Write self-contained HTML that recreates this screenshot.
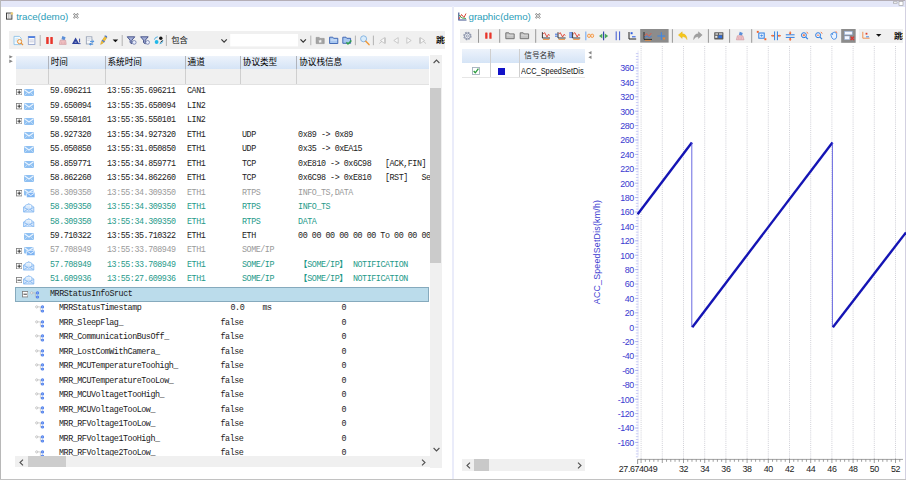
<!DOCTYPE html>
<html lang="zh">
<head>
<meta charset="utf-8">
<title>trace(demo) / graphic(demo)</title>
<style>
html,body{margin:0;padding:0;background:#fff;}
body{width:906px;height:480px;overflow:hidden;position:relative;font-family:"Liberation Sans","Noto Sans CJK SC",sans-serif;}
.abs{position:absolute;display:block;}
.m{font-family:"Liberation Mono","Noto Sans CJK SC",monospace;font-size:8.4px;letter-spacing:-0.455px;line-height:12px;white-space:nowrap;}
.h{font-family:"Liberation Sans","Noto Sans CJK SC",sans-serif;font-size:8.6px;line-height:12px;color:#000;white-space:nowrap;}
.tab{font-family:"Liberation Sans",sans-serif;font-size:9.8px;letter-spacing:-0.07px;line-height:14px;color:#2a9db8;white-space:nowrap;}
.ui{font-family:"Liberation Sans","Noto Sans CJK SC",sans-serif;font-size:8.4px;line-height:12px;color:#111;white-space:nowrap;}
.yl{font-family:"Liberation Sans",sans-serif;font-size:8.9px;letter-spacing:-0.5px;fill:#3a3ad0;}
.xl{font-family:"Liberation Sans",sans-serif;font-size:8.9px;letter-spacing:-0.4px;fill:#222;}
.yt{font-family:"Liberation Sans",sans-serif;font-size:8.8px;letter-spacing:0.22px;fill:#3a3ad0;}
.sg{font-family:"Liberation Sans",sans-serif;font-size:8.7px;line-height:12px;color:#111;white-space:nowrap;transform:scaleX(0.847);transform-origin:0 0;}
.fw{display:inline-block;width:9.17px;letter-spacing:0;font-weight:bold;overflow:visible;}
.fl{text-align:right;}
.fr{text-align:left;}
</style>
</head>
<body>
<!-- outer frame -->
<div class="abs" style="left:0;top:0;width:906px;height:6.7px;background:#e4e7f8"></div>
<div class="abs" style="left:0;top:0;width:906px;height:1px;background:#b4aeb6"></div>
<div class="abs" style="left:0;top:0;width:1px;height:480px;background:#b8b8b8"></div>
<div class="abs" style="left:452.1px;top:6px;width:2.1px;height:473px;background:#eaecfa"></div>
<div class="abs" style="left:904.7px;top:0px;width:1.3px;height:479px;background:#d3d1e1"></div>
<div class="abs" style="left:0;top:478.6px;width:906px;height:1.4px;background:#c2c2c2"></div>

<!-- ================= LEFT PANEL ================= -->
<!-- tab -->
<svg class="abs" style="left:6px;top:12.2px" width="7.6" height="8" viewBox="0 0 9 9"><rect x="0.6" y="1" width="6.4" height="7.2" fill="#f2f2f2" stroke="#3a3a3a" stroke-width="1.1"/><path d="M2.8 2V8M4.8 2V8" stroke="#9a9a9a" stroke-width="0.7"/><circle cx="7" cy="1.6" r="1.5" fill="#f1d27a"/></svg>
<span class="abs tab" style="left:16.2px;top:9.5px">trace(demo)</span>
<svg class="abs" style="left:73px;top:13.2px" width="5.8" height="5.8" viewBox="0 0 7 7"><path d="M0.8 0.8L6.2 6.2M6.2 0.8L0.8 6.2" stroke="#7a7a7a" stroke-width="2.2"/><path d="M0.8 0.8L6.2 6.2M6.2 0.8L0.8 6.2" stroke="#fff" stroke-width="0.9"/></svg>

<!-- toolbar -->
<div class="abs" style="left:9px;top:31px;width:436px;height:18.4px;background:#f0f0f0"></div>
<svg class="abs" style="left:0;top:0" width="906" height="480" viewBox="0 0 906 480">
<path d="M14 36.4H19.4L21.2 38.2V44.6H14Z" fill="#f4fafe" stroke="#8fc3e8" stroke-width="0.9"/>
<path d="M15.4 39H18.6M15.4 41H17.4" stroke="#a9d2ee" stroke-width="0.7"/>
<circle cx="19.6" cy="41.6" r="2.1" fill="#fdf3e4" stroke="#e8923a" stroke-width="1"/><path d="M21.2 43.2L23 45" stroke="#e8923a" stroke-width="1.2"/>
<rect x="28.3" y="36.4" width="6.6" height="8" fill="#fbfbfd" stroke="#8a9cc8" stroke-width="0.8"/><rect x="28.3" y="36.2" width="6.6" height="1.8" fill="#4f7fe0"/>
<path d="M29.4 40H33.8M29.4 41.8H33.8" stroke="#b9bdd0" stroke-width="0.7"/>
<path d="M40.2 35V46" stroke="#ababab" stroke-width="0.9"/>
<rect x="46.2" y="37" width="2.5" height="6.9" rx="0.5" fill="#e8352a"/><rect x="50.3" y="37" width="2.5" height="6.9" rx="0.5" fill="#e8352a"/>
<path d="M62.4 36L65.6 37.2L64.6 40.2L61.4 39.2Z" fill="#5b8fd8"/><path d="M60.2 40.2H65.6L66.2 44.4H59.4Z" fill="#f3c4c4" stroke="#c98f97" stroke-width="0.6"/><path d="M61.5 41.5V44M63 41.5V44M64.5 41.5V44" stroke="#d9a0a8" stroke-width="0.5"/>
<path d="M72 44L75.6 37.4L79.2 44Z" fill="#2b3f9a"/><path d="M74.6 42.2H76.6" stroke="#dfe4ff" stroke-width="0.7"/><path d="M79.6 38.6V42.4M78 43.6H80.6" stroke="#2b3f9a" stroke-width="0.9"/>
<rect x="86.3" y="36.8" width="5.6" height="7.2" fill="#f6f8fb" stroke="#8f9bb0" stroke-width="0.8"/><path d="M87.4 38.8H90.8M87.4 40.4H89.6" stroke="#b5bccb" stroke-width="0.6"/>
<path d="M90 41.4H93.8M92.4 40L93.8 41.4L92.4 42.8M93.2 44.2H89.6M91 43L89.6 44.2L91 45.2" stroke="#3f8ae0" stroke-width="0.9" fill="none"/>
<path d="M100.6 44.4L101.4 41.6L105.2 36L107 37.4L103.2 43Z" fill="#f2c233" stroke="#c9962a" stroke-width="0.5"/><path d="M104.2 35.8L106 35.4L107.2 36.6L106.6 38" fill="#4a78d0"/><path d="M102 40.2L104.6 42" stroke="#4a78d0" stroke-width="1.3"/>
<path d="M112.6 39.4H118.2L115.4 42.2Z" fill="#111"/>
<path d="M122.2 35V46" stroke="#ababab" stroke-width="0.9"/>
<path d="M127.2 36.8H134.8L131.9 40.2V43.8L130.1 42.6V40.2Z" fill="#a3aed6" stroke="#3c4a82" stroke-width="0.9"/>
<circle cx="134.2" cy="42.4" r="1.9" fill="#e9eefc" stroke="#5a6aa0" stroke-width="0.7"/>
<path d="M140.6 36.8H148.2L145.29999999999998 40.2V43.8L143.5 42.6V40.2Z" fill="#a3aed6" stroke="#3c4a82" stroke-width="0.9"/>
<circle cx="147.6" cy="42.4" r="1.9" fill="#e9eefc" stroke="#5a6aa0" stroke-width="0.7"/>
<circle cx="156.6" cy="42" r="1.9" fill="#22b8e8"/><circle cx="160.8" cy="38.2" r="1.7" fill="#151515"/>
<path d="M154.4 39.6Q155 37 157.8 36.8M163 40.6Q162.6 43.4 159.6 43.8" stroke="#3aa8e0" stroke-width="0.9" fill="none"/><path d="M160.4 42.4L162.6 40.4" stroke="#151515" stroke-width="0.9"/>
<path d="M166.4 35V46" stroke="#ababab" stroke-width="0.9"/>
<path d="M221.4 39.4L224.1 42.2L226.8 39.4" stroke="#3a3a3a" stroke-width="1.2" fill="none"/>
<rect x="230.2" y="34" width="67.8" height="12.4" fill="#fff"/>
<path d="M300.5 39.4L303.2 42.2L305.9 39.4" stroke="#333" stroke-width="1.2" fill="none"/>
<path d="M310.8 35.6V45.2" stroke="#ababab" stroke-width="0.9"/>
<path d="M316.2 37.4H319.2L320 38.4H324.2V43.6H316.2Z" fill="#a3a3a3" stroke="#8a8a8a" stroke-width="0.6"/><path d="M320.2 39.4L320.8 40.6L322 40.8L321.1 41.7L321.3 42.9L320.2 42.3L319.1 42.9L319.3 41.7L318.4 40.8L319.6 40.6Z" fill="#f4f4f4"/>
<path d="M329.6 37.2H332.8L333.6 38.3H337.8V43.5H329.6Z" fill="#a9c8f0" stroke="#365fb0" stroke-width="0.9"/><path d="M330.6 40H337" stroke="#e3eefc" stroke-width="0.8"/>
<path d="M342.8 37.2H346L346.8 38.3H350.6V43.3H342.8Z" fill="#a9c8f0" stroke="#365fb0" stroke-width="0.9"/><path d="M346.4 42.2L348 44L351.4 40.6" stroke="#2fa04a" stroke-width="1.4" fill="none"/>
<path d="M355.4 35.6V45.2" stroke="#ababab" stroke-width="0.9"/>
<circle cx="363.6" cy="38.8" r="3" fill="#d9ecfb" stroke="#7fb0e0" stroke-width="0.9"/><path d="M365.8 41.2L369 44.6" stroke="#f09a3a" stroke-width="1.5" stroke-linecap="round"/>
<path d="M373.4 35.6V45.2" stroke="#ababab" stroke-width="0.9"/>
<path d="M384.6 37.6V43.4L380.4 40.5Z" fill="#f8f8f8" stroke="#b8b8b8" stroke-width="0.7"/><path d="M379.2 43.6L382 41.2M385.4 37.6V43.6" stroke="#b8b8b8" stroke-width="0.7"/>
<path d="M398.2 37.6V43.4L393.8 40.5Z" fill="#f8f8f8" stroke="#b8b8b8" stroke-width="0.7"/>
<path d="M406.8 37.6V43.4L411.2 40.5Z" fill="#f8f8f8" stroke="#b8b8b8" stroke-width="0.7"/>
<path d="M420.4 37.6V43.4L424.6 40.5Z" fill="#f8f8f8" stroke="#b8b8b8" stroke-width="0.7"/><path d="M426 43.6L423.2 41.2M419.6 37.6V43.6" stroke="#b8b8b8" stroke-width="0.7"/>
</svg>
<span class="abs ui" style="left:171.2px;top:34.2px">包含</span>
<span class="abs ui" style="left:436px;top:34px;width:9px;overflow:hidden;font-weight:bold">跳转</span>

<!-- header -->
<svg class="abs" style="left:9px;top:55.4px" width="5" height="9" viewBox="0 0 5 9" ><path d="M0.3 0.2L3.8 1.8L0.3 3.4ZM0.3 4.5L3.8 6.2L0.3 7.9Z" fill="#858585"/></svg>
<div class="abs" style="left:15.6px;top:55.6px;width:413.6px;height:13.8px;background:linear-gradient(#edf3fb,#e2ecf9 45%,#d5e4f6)"></div>
<div class="abs" style="left:15.6px;top:69.4px;width:413.6px;height:15px;background:#f0f0f0"></div>
<div class="abs" style="left:15.6px;top:84.2px;width:413.6px;height:0.8px;background:#e2e2e2"></div>
<div class="abs" style="left:48.1px;top:55.6px;width:0.8px;height:13.8px;background:#b0b4bc"></div><div class="abs" style="left:48.1px;top:69.4px;width:0.8px;height:15px;background:#cfcfcf"></div>
<div class="abs" style="left:105px;top:55.6px;width:0.8px;height:13.8px;background:#b0b4bc"></div><div class="abs" style="left:105px;top:69.4px;width:0.8px;height:15px;background:#cfcfcf"></div>
<div class="abs" style="left:184.8px;top:55.6px;width:0.8px;height:13.8px;background:#b0b4bc"></div><div class="abs" style="left:184.8px;top:69.4px;width:0.8px;height:15px;background:#cfcfcf"></div>
<div class="abs" style="left:240.2px;top:55.6px;width:0.8px;height:13.8px;background:#b0b4bc"></div><div class="abs" style="left:240.2px;top:69.4px;width:0.8px;height:15px;background:#cfcfcf"></div>
<div class="abs" style="left:296.3px;top:55.6px;width:0.8px;height:13.8px;background:#b0b4bc"></div><div class="abs" style="left:296.3px;top:69.4px;width:0.8px;height:15px;background:#cfcfcf"></div>
<span class="abs h" style="left:50.7px;top:56.4px">时间</span>
<span class="abs h" style="left:107.5px;top:56.4px">系统时间</span>
<span class="abs h" style="left:187.6px;top:56.4px">通道</span>
<span class="abs h" style="left:242.8px;top:56.4px">协议类型</span>
<span class="abs h" style="left:299.2px;top:56.4px">协议栈信息</span>

<!-- rows -->
<svg class="abs" style="left:15.5px;top:88.90px" width="6.4" height="6.4" viewBox="0 0 7 7"><rect x="0.5" y="0.5" width="6" height="6" fill="#fff" stroke="#7c7c7c" stroke-width="0.9"/><path d="M1.6 3.5H5.4" stroke="#2a2a2a" stroke-width="1"/><path d="M3.5 1.6V5.4" stroke="#2a2a2a" stroke-width="1"/></svg>
<svg class="abs" style="left:24px;top:88.60px" width="10" height="7" viewBox="0 0 10 7"><rect x="0" y="0" width="10" height="7" rx="1" fill="#8fc0f2"/><path d="M0.5 0.8L5 4L9.5 0.8" stroke="#eaf4ff" stroke-width="1.1" fill="none"/><path d="M0.5 6.4L3.6 3.4M9.5 6.4L6.4 3.4" stroke="#d4e8fb" stroke-width="0.7" fill="none"/></svg>
<span class="abs m" style="left:50px;top:85.30px;color:#222222">59.696211</span>
<span class="abs m" style="left:107px;top:85.30px;color:#222222">13:55:35.696211</span>
<span class="abs m" style="left:187px;top:85.30px;color:#222222">CAN1</span>
<svg class="abs" style="left:15.5px;top:103.37px" width="6.4" height="6.4" viewBox="0 0 7 7"><rect x="0.5" y="0.5" width="6" height="6" fill="#fff" stroke="#7c7c7c" stroke-width="0.9"/><path d="M1.6 3.5H5.4" stroke="#2a2a2a" stroke-width="1"/><path d="M3.5 1.6V5.4" stroke="#2a2a2a" stroke-width="1"/></svg>
<svg class="abs" style="left:24px;top:103.07px" width="10" height="7" viewBox="0 0 10 7"><rect x="0" y="0" width="10" height="7" rx="1" fill="#8fc0f2"/><path d="M0.5 0.8L5 4L9.5 0.8" stroke="#eaf4ff" stroke-width="1.1" fill="none"/><path d="M0.5 6.4L3.6 3.4M9.5 6.4L6.4 3.4" stroke="#d4e8fb" stroke-width="0.7" fill="none"/></svg>
<span class="abs m" style="left:50px;top:99.77px;color:#222222">59.650094</span>
<span class="abs m" style="left:107px;top:99.77px;color:#222222">13:55:35.650094</span>
<span class="abs m" style="left:187px;top:99.77px;color:#222222">LIN2</span>
<svg class="abs" style="left:15.5px;top:117.84px" width="6.4" height="6.4" viewBox="0 0 7 7"><rect x="0.5" y="0.5" width="6" height="6" fill="#fff" stroke="#7c7c7c" stroke-width="0.9"/><path d="M1.6 3.5H5.4" stroke="#2a2a2a" stroke-width="1"/><path d="M3.5 1.6V5.4" stroke="#2a2a2a" stroke-width="1"/></svg>
<svg class="abs" style="left:24px;top:117.54px" width="10" height="7" viewBox="0 0 10 7"><rect x="0" y="0" width="10" height="7" rx="1" fill="#8fc0f2"/><path d="M0.5 0.8L5 4L9.5 0.8" stroke="#eaf4ff" stroke-width="1.1" fill="none"/><path d="M0.5 6.4L3.6 3.4M9.5 6.4L6.4 3.4" stroke="#d4e8fb" stroke-width="0.7" fill="none"/></svg>
<span class="abs m" style="left:50px;top:114.24px;color:#222222">59.550101</span>
<span class="abs m" style="left:107px;top:114.24px;color:#222222">13:55:35.550101</span>
<span class="abs m" style="left:187px;top:114.24px;color:#222222">LIN2</span>
<svg class="abs" style="left:24px;top:132.01px" width="10" height="7" viewBox="0 0 10 7"><rect x="0" y="0" width="10" height="7" rx="1" fill="#8fc0f2"/><path d="M0.5 0.8L5 4L9.5 0.8" stroke="#eaf4ff" stroke-width="1.1" fill="none"/><path d="M0.5 6.4L3.6 3.4M9.5 6.4L6.4 3.4" stroke="#d4e8fb" stroke-width="0.7" fill="none"/></svg>
<span class="abs m" style="left:50px;top:128.71px;color:#222222">58.927320</span>
<span class="abs m" style="left:107px;top:128.71px;color:#222222">13:55:34.927320</span>
<span class="abs m" style="left:187px;top:128.71px;color:#222222">ETH1</span>
<span class="abs m" style="left:242px;top:128.71px;color:#222222">UDP</span>
<span class="abs m" style="left:298.1px;top:128.71px;color:#222222">0x89&nbsp;->&nbsp;0x89</span>
<svg class="abs" style="left:24px;top:146.48px" width="10" height="7" viewBox="0 0 10 7"><rect x="0" y="0" width="10" height="7" rx="1" fill="#8fc0f2"/><path d="M0.5 0.8L5 4L9.5 0.8" stroke="#eaf4ff" stroke-width="1.1" fill="none"/><path d="M0.5 6.4L3.6 3.4M9.5 6.4L6.4 3.4" stroke="#d4e8fb" stroke-width="0.7" fill="none"/></svg>
<span class="abs m" style="left:50px;top:143.18px;color:#222222">55.050850</span>
<span class="abs m" style="left:107px;top:143.18px;color:#222222">13:55:31.050850</span>
<span class="abs m" style="left:187px;top:143.18px;color:#222222">ETH1</span>
<span class="abs m" style="left:242px;top:143.18px;color:#222222">UDP</span>
<span class="abs m" style="left:298.1px;top:143.18px;color:#222222">0x35&nbsp;->&nbsp;0xEA15</span>
<svg class="abs" style="left:24px;top:160.95px" width="10" height="7" viewBox="0 0 10 7"><rect x="0" y="0" width="10" height="7" rx="1" fill="#8fc0f2"/><path d="M0.5 0.8L5 4L9.5 0.8" stroke="#eaf4ff" stroke-width="1.1" fill="none"/><path d="M0.5 6.4L3.6 3.4M9.5 6.4L6.4 3.4" stroke="#d4e8fb" stroke-width="0.7" fill="none"/></svg>
<span class="abs m" style="left:50px;top:157.65px;color:#222222">58.859771</span>
<span class="abs m" style="left:107px;top:157.65px;color:#222222">13:55:34.859771</span>
<span class="abs m" style="left:187px;top:157.65px;color:#222222">ETH1</span>
<span class="abs m" style="left:242px;top:157.65px;color:#222222">TCP</span>
<span class="abs m" style="left:298.1px;top:157.65px;color:#222222">0xE810&nbsp;->&nbsp;0x6C98&nbsp;&nbsp;&nbsp;[ACK,FIN]</span>
<svg class="abs" style="left:24px;top:175.42px" width="10" height="7" viewBox="0 0 10 7"><rect x="0" y="0" width="10" height="7" rx="1" fill="#8fc0f2"/><path d="M0.5 0.8L5 4L9.5 0.8" stroke="#eaf4ff" stroke-width="1.1" fill="none"/><path d="M0.5 6.4L3.6 3.4M9.5 6.4L6.4 3.4" stroke="#d4e8fb" stroke-width="0.7" fill="none"/></svg>
<span class="abs m" style="left:50px;top:172.12px;color:#222222">58.862260</span>
<span class="abs m" style="left:107px;top:172.12px;color:#222222">13:55:34.862260</span>
<span class="abs m" style="left:187px;top:172.12px;color:#222222">ETH1</span>
<span class="abs m" style="left:242px;top:172.12px;color:#222222">TCP</span>
<span class="abs m" style="left:298.1px;top:172.12px;color:#222222">0x6C98&nbsp;->&nbsp;0xE810&nbsp;&nbsp;&nbsp;[RST]&nbsp;&nbsp;&nbsp;Se</span>
<svg class="abs" style="left:15.5px;top:190.19px" width="6.4" height="6.4" viewBox="0 0 7 7"><rect x="0.5" y="0.5" width="6" height="6" fill="#fff" stroke="#7c7c7c" stroke-width="0.9"/><path d="M1.6 3.5H5.4" stroke="#2a2a2a" stroke-width="1"/><path d="M3.5 1.6V5.4" stroke="#2a2a2a" stroke-width="1"/></svg>
<svg class="abs" style="left:24px;top:189.49px" width="11" height="8.5" viewBox="0 0 11 8.5"><rect x="0" y="0" width="9.5" height="6.5" rx="1" fill="#8fc0f2"/><path d="M0.5 0.8L4.7 3.8L9 0.8" stroke="#eaf4ff" stroke-width="1.1" fill="none"/><rect x="2.6" y="3.4" width="8.4" height="5.1" rx="0.9" fill="#7fb4f2" stroke="#eef6ff" stroke-width="0.7"/><path d="M3.2 4.2L6.8 6.6L10.4 4.2" stroke="#eef6ff" stroke-width="0.9" fill="none"/></svg>
<span class="abs m" style="left:50px;top:186.59px;color:#9a9a9a">58.309350</span>
<span class="abs m" style="left:107px;top:186.59px;color:#9a9a9a">13:55:34.309350</span>
<span class="abs m" style="left:187px;top:186.59px;color:#9a9a9a">ETH1</span>
<span class="abs m" style="left:242px;top:186.59px;color:#9a9a9a">RTPS</span>
<span class="abs m" style="left:298.1px;top:186.59px;color:#9a9a9a">INFO_TS,DATA</span>
<svg class="abs" style="left:23.4px;top:203.06px" width="11.4" height="9.6" viewBox="0 0 11.4 9.6"><path d="M0.6 4L5.7 0.7L10.8 4V9H0.6Z" fill="#dbeafc" stroke="#86b8f0" stroke-width="0.9"/><rect x="3" y="1.8" width="5.4" height="4" fill="#fbfdff" stroke="#9cc6f4" stroke-width="0.6"/><path d="M4 3.2H7.4M4 4.4H7.4" stroke="#a9cdf5" stroke-width="0.5"/><path d="M0.8 4.4L5.7 7.2L10.6 4.4M0.8 8.8L4.4 6.4M10.6 8.8L7 6.4" stroke="#86b8f0" stroke-width="0.9" fill="none"/></svg>
<span class="abs m" style="left:50px;top:201.06px;color:#1f9a8a">58.309350</span>
<span class="abs m" style="left:107px;top:201.06px;color:#1f9a8a">13:55:34.309350</span>
<span class="abs m" style="left:187px;top:201.06px;color:#1f9a8a">ETH1</span>
<span class="abs m" style="left:242px;top:201.06px;color:#1f9a8a">RTPS</span>
<span class="abs m" style="left:298.1px;top:201.06px;color:#1f9a8a">INFO_TS</span>
<svg class="abs" style="left:23.4px;top:217.53px" width="11.4" height="9.6" viewBox="0 0 11.4 9.6"><path d="M0.6 4L5.7 0.7L10.8 4V9H0.6Z" fill="#dbeafc" stroke="#86b8f0" stroke-width="0.9"/><rect x="3" y="1.8" width="5.4" height="4" fill="#fbfdff" stroke="#9cc6f4" stroke-width="0.6"/><path d="M4 3.2H7.4M4 4.4H7.4" stroke="#a9cdf5" stroke-width="0.5"/><path d="M0.8 4.4L5.7 7.2L10.6 4.4M0.8 8.8L4.4 6.4M10.6 8.8L7 6.4" stroke="#86b8f0" stroke-width="0.9" fill="none"/></svg>
<span class="abs m" style="left:50px;top:215.53px;color:#1f9a8a">58.309350</span>
<span class="abs m" style="left:107px;top:215.53px;color:#1f9a8a">13:55:34.309350</span>
<span class="abs m" style="left:187px;top:215.53px;color:#1f9a8a">ETH1</span>
<span class="abs m" style="left:242px;top:215.53px;color:#1f9a8a">RTPS</span>
<span class="abs m" style="left:298.1px;top:215.53px;color:#1f9a8a">DATA</span>
<svg class="abs" style="left:24px;top:233.30px" width="10" height="7" viewBox="0 0 10 7"><rect x="0" y="0" width="10" height="7" rx="1" fill="#8fc0f2"/><path d="M0.5 0.8L5 4L9.5 0.8" stroke="#eaf4ff" stroke-width="1.1" fill="none"/><path d="M0.5 6.4L3.6 3.4M9.5 6.4L6.4 3.4" stroke="#d4e8fb" stroke-width="0.7" fill="none"/></svg>
<span class="abs m" style="left:50px;top:230.00px;color:#222222">59.710322</span>
<span class="abs m" style="left:107px;top:230.00px;color:#222222">13:55:35.710322</span>
<span class="abs m" style="left:187px;top:230.00px;color:#222222">ETH1</span>
<span class="abs m" style="left:242px;top:230.00px;color:#222222">ETH</span>
<span class="abs m" style="left:298.1px;top:230.00px;color:#222222">00&nbsp;00&nbsp;00&nbsp;00&nbsp;00&nbsp;00&nbsp;To&nbsp;00&nbsp;00&nbsp;00</span>
<svg class="abs" style="left:15.5px;top:248.07px" width="6.4" height="6.4" viewBox="0 0 7 7"><rect x="0.5" y="0.5" width="6" height="6" fill="#fff" stroke="#7c7c7c" stroke-width="0.9"/><path d="M1.6 3.5H5.4" stroke="#2a2a2a" stroke-width="1"/><path d="M3.5 1.6V5.4" stroke="#2a2a2a" stroke-width="1"/></svg>
<svg class="abs" style="left:24px;top:247.37px" width="11" height="8.5" viewBox="0 0 11 8.5"><rect x="0" y="0" width="9.5" height="6.5" rx="1" fill="#8fc0f2"/><path d="M0.5 0.8L4.7 3.8L9 0.8" stroke="#eaf4ff" stroke-width="1.1" fill="none"/><rect x="2.6" y="3.4" width="8.4" height="5.1" rx="0.9" fill="#7fb4f2" stroke="#eef6ff" stroke-width="0.7"/><path d="M3.2 4.2L6.8 6.6L10.4 4.2" stroke="#eef6ff" stroke-width="0.9" fill="none"/></svg>
<span class="abs m" style="left:50px;top:244.47px;color:#9a9a9a">57.708949</span>
<span class="abs m" style="left:107px;top:244.47px;color:#9a9a9a">13:55:33.708949</span>
<span class="abs m" style="left:187px;top:244.47px;color:#9a9a9a">ETH1</span>
<span class="abs m" style="left:242px;top:244.47px;color:#9a9a9a">SOME/IP</span>
<svg class="abs" style="left:15.5px;top:262.54px" width="6.4" height="6.4" viewBox="0 0 7 7"><rect x="0.5" y="0.5" width="6" height="6" fill="#fff" stroke="#7c7c7c" stroke-width="0.9"/><path d="M1.6 3.5H5.4" stroke="#2a2a2a" stroke-width="1"/><path d="M3.5 1.6V5.4" stroke="#2a2a2a" stroke-width="1"/></svg>
<svg class="abs" style="left:23.4px;top:260.94px" width="11.4" height="9.6" viewBox="0 0 11.4 9.6"><path d="M0.6 4L5.7 0.7L10.8 4V9H0.6Z" fill="#dbeafc" stroke="#86b8f0" stroke-width="0.9"/><rect x="3" y="1.8" width="5.4" height="4" fill="#fbfdff" stroke="#9cc6f4" stroke-width="0.6"/><path d="M4 3.2H7.4M4 4.4H7.4" stroke="#a9cdf5" stroke-width="0.5"/><path d="M0.8 4.4L5.7 7.2L10.6 4.4M0.8 8.8L4.4 6.4M10.6 8.8L7 6.4" stroke="#86b8f0" stroke-width="0.9" fill="none"/></svg>
<span class="abs m" style="left:50px;top:258.94px;color:#1f9a8a">57.708949</span>
<span class="abs m" style="left:107px;top:258.94px;color:#1f9a8a">13:55:33.708949</span>
<span class="abs m" style="left:187px;top:258.94px;color:#1f9a8a">ETH1</span>
<span class="abs m" style="left:242px;top:258.94px;color:#1f9a8a">SOME/IP</span>
<span class="abs m" style="left:298.1px;top:258.94px;color:#1f9a8a"><span class="fw fl">【</span>SOME/IP<span class="fw fr">】</span>&nbsp;NOTIFICATION</span>
<svg class="abs" style="left:15.5px;top:277.01px" width="6.4" height="6.4" viewBox="0 0 7 7"><rect x="0.5" y="0.5" width="6" height="6" fill="#fff" stroke="#7c7c7c" stroke-width="0.9"/><path d="M1.6 3.5H5.4" stroke="#2a2a2a" stroke-width="1"/></svg>
<svg class="abs" style="left:23.4px;top:275.41px" width="11.4" height="9.6" viewBox="0 0 11.4 9.6"><path d="M0.6 4L5.7 0.7L10.8 4V9H0.6Z" fill="#dbeafc" stroke="#86b8f0" stroke-width="0.9"/><rect x="3" y="1.8" width="5.4" height="4" fill="#fbfdff" stroke="#9cc6f4" stroke-width="0.6"/><path d="M4 3.2H7.4M4 4.4H7.4" stroke="#a9cdf5" stroke-width="0.5"/><path d="M0.8 4.4L5.7 7.2L10.6 4.4M0.8 8.8L4.4 6.4M10.6 8.8L7 6.4" stroke="#86b8f0" stroke-width="0.9" fill="none"/></svg>
<span class="abs m" style="left:50px;top:273.41px;color:#1f9a8a">51.609936</span>
<span class="abs m" style="left:107px;top:273.41px;color:#1f9a8a">13:55:27.609936</span>
<span class="abs m" style="left:187px;top:273.41px;color:#1f9a8a">ETH1</span>
<span class="abs m" style="left:242px;top:273.41px;color:#1f9a8a">SOME/IP</span>
<span class="abs m" style="left:298.1px;top:273.41px;color:#1f9a8a"><span class="fw fl">【</span>SOME/IP<span class="fw fr">】</span>&nbsp;NOTIFICATION</span>
<div class="abs" style="left:15.2px;top:287.18px;width:414.2px;height:14.6px;background:#bbdceb;border:0.8px solid #86aabd;box-sizing:border-box"></div>
<svg class="abs" style="left:22px;top:291.28px" width="6.4" height="6.4" viewBox="0 0 7 7"><rect x="0.5" y="0.5" width="6" height="6" fill="#fff" stroke="#7c7c7c" stroke-width="0.9"/><path d="M1.6 3.5H5.4" stroke="#2a2a2a" stroke-width="1"/></svg>
<svg class="abs" style="left:30px;top:290.68px" width="10" height="8" viewBox="0 0 10 8"><circle cx="1.7" cy="1.9" r="1.1" fill="#fff" stroke="#a4a4a4" stroke-width="0.6"/><path d="M2.8 1.9H5.4V6.2H6.2M5.4 1.9H6.2" stroke="#b4b4b4" stroke-width="0.6" fill="none"/><circle cx="7.5" cy="1.9" r="1.55" fill="#4a7cec"/><circle cx="7.5" cy="1.9" r="0.6" fill="#9dbcf8"/><circle cx="7.5" cy="6" r="1.55" fill="#4a7cec"/><circle cx="7.5" cy="6" r="0.6" fill="#9dbcf8"/></svg>
<span class="abs m" style="left:50px;top:287.88px;color:#1a1a1a">MRRStatusInfoSruct</span>
<svg class="abs" style="left:35px;top:305.15px" width="10" height="8" viewBox="0 0 10 8"><circle cx="1.7" cy="1.9" r="1.1" fill="#fff" stroke="#a4a4a4" stroke-width="0.6"/><path d="M2.8 1.9H5.4V6.2H6.2M5.4 1.9H6.2" stroke="#b4b4b4" stroke-width="0.6" fill="none"/><circle cx="7.5" cy="1.9" r="1.55" fill="#4a7cec"/><circle cx="7.5" cy="1.9" r="0.6" fill="#9dbcf8"/><circle cx="7.5" cy="6" r="1.55" fill="#4a7cec"/><circle cx="7.5" cy="6" r="0.6" fill="#9dbcf8"/></svg>
<span class="abs m" style="left:59px;top:302.35px;color:#1a1a1a">MRRStatusTimestamp</span>
<span class="abs m" style="left:230.5px;top:302.35px;color:#1a1a1a">0.0</span>
<span class="abs m" style="left:262.5px;top:302.35px;color:#1a1a1a">ms</span>
<span class="abs m" style="left:341.5px;top:302.35px;color:#1a1a1a">0</span>
<svg class="abs" style="left:35px;top:319.62px" width="10" height="8" viewBox="0 0 10 8"><circle cx="1.7" cy="1.9" r="1.1" fill="#fff" stroke="#a4a4a4" stroke-width="0.6"/><path d="M2.8 1.9H5.4V6.2H6.2M5.4 1.9H6.2" stroke="#b4b4b4" stroke-width="0.6" fill="none"/><circle cx="7.5" cy="1.9" r="1.55" fill="#4a7cec"/><circle cx="7.5" cy="1.9" r="0.6" fill="#9dbcf8"/><circle cx="7.5" cy="6" r="1.55" fill="#4a7cec"/><circle cx="7.5" cy="6" r="0.6" fill="#9dbcf8"/></svg>
<span class="abs m" style="left:59px;top:316.82px;color:#1a1a1a">MRR_SleepFlag_</span>
<span class="abs m" style="left:220.5px;top:316.82px;color:#1a1a1a">false</span>
<span class="abs m" style="left:341.5px;top:316.82px;color:#1a1a1a">0</span>
<svg class="abs" style="left:35px;top:334.09px" width="10" height="8" viewBox="0 0 10 8"><circle cx="1.7" cy="1.9" r="1.1" fill="#fff" stroke="#a4a4a4" stroke-width="0.6"/><path d="M2.8 1.9H5.4V6.2H6.2M5.4 1.9H6.2" stroke="#b4b4b4" stroke-width="0.6" fill="none"/><circle cx="7.5" cy="1.9" r="1.55" fill="#4a7cec"/><circle cx="7.5" cy="1.9" r="0.6" fill="#9dbcf8"/><circle cx="7.5" cy="6" r="1.55" fill="#4a7cec"/><circle cx="7.5" cy="6" r="0.6" fill="#9dbcf8"/></svg>
<span class="abs m" style="left:59px;top:331.29px;color:#1a1a1a">MRR_CommunicationBusOff_</span>
<span class="abs m" style="left:220.5px;top:331.29px;color:#1a1a1a">false</span>
<span class="abs m" style="left:341.5px;top:331.29px;color:#1a1a1a">0</span>
<svg class="abs" style="left:35px;top:348.56px" width="10" height="8" viewBox="0 0 10 8"><circle cx="1.7" cy="1.9" r="1.1" fill="#fff" stroke="#a4a4a4" stroke-width="0.6"/><path d="M2.8 1.9H5.4V6.2H6.2M5.4 1.9H6.2" stroke="#b4b4b4" stroke-width="0.6" fill="none"/><circle cx="7.5" cy="1.9" r="1.55" fill="#4a7cec"/><circle cx="7.5" cy="1.9" r="0.6" fill="#9dbcf8"/><circle cx="7.5" cy="6" r="1.55" fill="#4a7cec"/><circle cx="7.5" cy="6" r="0.6" fill="#9dbcf8"/></svg>
<span class="abs m" style="left:59px;top:345.76px;color:#1a1a1a">MRR_LostComWithCamera_</span>
<span class="abs m" style="left:220.5px;top:345.76px;color:#1a1a1a">false</span>
<span class="abs m" style="left:341.5px;top:345.76px;color:#1a1a1a">0</span>
<svg class="abs" style="left:35px;top:363.03px" width="10" height="8" viewBox="0 0 10 8"><circle cx="1.7" cy="1.9" r="1.1" fill="#fff" stroke="#a4a4a4" stroke-width="0.6"/><path d="M2.8 1.9H5.4V6.2H6.2M5.4 1.9H6.2" stroke="#b4b4b4" stroke-width="0.6" fill="none"/><circle cx="7.5" cy="1.9" r="1.55" fill="#4a7cec"/><circle cx="7.5" cy="1.9" r="0.6" fill="#9dbcf8"/><circle cx="7.5" cy="6" r="1.55" fill="#4a7cec"/><circle cx="7.5" cy="6" r="0.6" fill="#9dbcf8"/></svg>
<span class="abs m" style="left:59px;top:360.23px;color:#1a1a1a">MRR_MCUTemperatureToohigh_</span>
<span class="abs m" style="left:220.5px;top:360.23px;color:#1a1a1a">false</span>
<span class="abs m" style="left:341.5px;top:360.23px;color:#1a1a1a">0</span>
<svg class="abs" style="left:35px;top:377.50px" width="10" height="8" viewBox="0 0 10 8"><circle cx="1.7" cy="1.9" r="1.1" fill="#fff" stroke="#a4a4a4" stroke-width="0.6"/><path d="M2.8 1.9H5.4V6.2H6.2M5.4 1.9H6.2" stroke="#b4b4b4" stroke-width="0.6" fill="none"/><circle cx="7.5" cy="1.9" r="1.55" fill="#4a7cec"/><circle cx="7.5" cy="1.9" r="0.6" fill="#9dbcf8"/><circle cx="7.5" cy="6" r="1.55" fill="#4a7cec"/><circle cx="7.5" cy="6" r="0.6" fill="#9dbcf8"/></svg>
<span class="abs m" style="left:59px;top:374.70px;color:#1a1a1a">MRR_MCUTemperatureTooLow_</span>
<span class="abs m" style="left:220.5px;top:374.70px;color:#1a1a1a">false</span>
<span class="abs m" style="left:341.5px;top:374.70px;color:#1a1a1a">0</span>
<svg class="abs" style="left:35px;top:391.97px" width="10" height="8" viewBox="0 0 10 8"><circle cx="1.7" cy="1.9" r="1.1" fill="#fff" stroke="#a4a4a4" stroke-width="0.6"/><path d="M2.8 1.9H5.4V6.2H6.2M5.4 1.9H6.2" stroke="#b4b4b4" stroke-width="0.6" fill="none"/><circle cx="7.5" cy="1.9" r="1.55" fill="#4a7cec"/><circle cx="7.5" cy="1.9" r="0.6" fill="#9dbcf8"/><circle cx="7.5" cy="6" r="1.55" fill="#4a7cec"/><circle cx="7.5" cy="6" r="0.6" fill="#9dbcf8"/></svg>
<span class="abs m" style="left:59px;top:389.17px;color:#1a1a1a">MRR_MCUVoltagetTooHigh_</span>
<span class="abs m" style="left:220.5px;top:389.17px;color:#1a1a1a">false</span>
<span class="abs m" style="left:341.5px;top:389.17px;color:#1a1a1a">0</span>
<svg class="abs" style="left:35px;top:406.44px" width="10" height="8" viewBox="0 0 10 8"><circle cx="1.7" cy="1.9" r="1.1" fill="#fff" stroke="#a4a4a4" stroke-width="0.6"/><path d="M2.8 1.9H5.4V6.2H6.2M5.4 1.9H6.2" stroke="#b4b4b4" stroke-width="0.6" fill="none"/><circle cx="7.5" cy="1.9" r="1.55" fill="#4a7cec"/><circle cx="7.5" cy="1.9" r="0.6" fill="#9dbcf8"/><circle cx="7.5" cy="6" r="1.55" fill="#4a7cec"/><circle cx="7.5" cy="6" r="0.6" fill="#9dbcf8"/></svg>
<span class="abs m" style="left:59px;top:403.64px;color:#1a1a1a">MRR_MCUVoltageTooLow_</span>
<span class="abs m" style="left:220.5px;top:403.64px;color:#1a1a1a">false</span>
<span class="abs m" style="left:341.5px;top:403.64px;color:#1a1a1a">0</span>
<svg class="abs" style="left:35px;top:420.91px" width="10" height="8" viewBox="0 0 10 8"><circle cx="1.7" cy="1.9" r="1.1" fill="#fff" stroke="#a4a4a4" stroke-width="0.6"/><path d="M2.8 1.9H5.4V6.2H6.2M5.4 1.9H6.2" stroke="#b4b4b4" stroke-width="0.6" fill="none"/><circle cx="7.5" cy="1.9" r="1.55" fill="#4a7cec"/><circle cx="7.5" cy="1.9" r="0.6" fill="#9dbcf8"/><circle cx="7.5" cy="6" r="1.55" fill="#4a7cec"/><circle cx="7.5" cy="6" r="0.6" fill="#9dbcf8"/></svg>
<span class="abs m" style="left:59px;top:418.11px;color:#1a1a1a">MRR_RFVoltage1TooLow_</span>
<span class="abs m" style="left:220.5px;top:418.11px;color:#1a1a1a">false</span>
<span class="abs m" style="left:341.5px;top:418.11px;color:#1a1a1a">0</span>
<svg class="abs" style="left:35px;top:435.38px" width="10" height="8" viewBox="0 0 10 8"><circle cx="1.7" cy="1.9" r="1.1" fill="#fff" stroke="#a4a4a4" stroke-width="0.6"/><path d="M2.8 1.9H5.4V6.2H6.2M5.4 1.9H6.2" stroke="#b4b4b4" stroke-width="0.6" fill="none"/><circle cx="7.5" cy="1.9" r="1.55" fill="#4a7cec"/><circle cx="7.5" cy="1.9" r="0.6" fill="#9dbcf8"/><circle cx="7.5" cy="6" r="1.55" fill="#4a7cec"/><circle cx="7.5" cy="6" r="0.6" fill="#9dbcf8"/></svg>
<span class="abs m" style="left:59px;top:432.58px;color:#1a1a1a">MRR_RFVoltage1TooHigh_</span>
<span class="abs m" style="left:220.5px;top:432.58px;color:#1a1a1a">false</span>
<span class="abs m" style="left:341.5px;top:432.58px;color:#1a1a1a">0</span>
<svg class="abs" style="left:35px;top:449.85px" width="10" height="8" viewBox="0 0 10 8"><circle cx="1.7" cy="1.9" r="1.1" fill="#fff" stroke="#a4a4a4" stroke-width="0.6"/><path d="M2.8 1.9H5.4V6.2H6.2M5.4 1.9H6.2" stroke="#b4b4b4" stroke-width="0.6" fill="none"/><circle cx="7.5" cy="1.9" r="1.55" fill="#4a7cec"/><circle cx="7.5" cy="1.9" r="0.6" fill="#9dbcf8"/><circle cx="7.5" cy="6" r="1.55" fill="#4a7cec"/><circle cx="7.5" cy="6" r="0.6" fill="#9dbcf8"/></svg>
<span class="abs m" style="left:59px;top:447.05px;color:#1a1a1a">MRR_RFVoltage2TooLow_</span>
<span class="abs m" style="left:220.5px;top:447.05px;color:#1a1a1a">false</span>
<span class="abs m" style="left:341.5px;top:447.05px;color:#1a1a1a">0</span>

<!-- scrollbars -->
<div class="abs" style="left:430px;top:54.8px;width:12px;height:412.8px;background:#f0f0f0"></div>
<div class="abs" style="left:430.4px;top:88px;width:11px;height:175.2px;background:#cbcbcb"></div>
<svg class="abs" style="left:432.5px;top:58.5px" width="7" height="5" viewBox="0 0 7 5"><path d="M0.6 4L3.5 1L6.4 4" stroke="#505050" stroke-width="1.1" fill="none"/></svg>
<svg class="abs" style="left:432.5px;top:447px" width="7" height="5" viewBox="0 0 7 5"><path d="M0.6 1L3.5 4L6.4 1" stroke="#505050" stroke-width="1.1" fill="none"/></svg>
<div class="abs" style="left:15.1px;top:456.3px;width:426.9px;height:11.2px;background:#f0f0f0"></div>
<div class="abs" style="left:28px;top:456.3px;width:37.8px;height:11.2px;background:#cdcdcd"></div>
<svg class="abs" style="left:19px;top:458.5px" width="5" height="7" viewBox="0 0 5 7"><path d="M4 0.6L1 3.5L4 6.4" stroke="#505050" stroke-width="1.1" fill="none"/></svg>
<svg class="abs" style="left:421px;top:458.5px" width="5" height="7" viewBox="0 0 5 7"><path d="M1 0.6L4 3.5L1 6.4" stroke="#505050" stroke-width="1.1" fill="none"/></svg>

<!-- ================= RIGHT PANEL ================= -->
<svg class="abs" style="left:458px;top:12px" width="9" height="9" viewBox="0 0 9 9"><path d="M0.8 0.5V8H8.5" stroke="#3b4f8c" stroke-width="1.1" fill="none"/><path d="M1 7L3.5 2.5L6 5.5L8 1.5" stroke="#d94a3a" stroke-width="1" fill="none"/><path d="M1 3L4 6L8 6.5" stroke="#3aa04a" stroke-width="0.9" fill="none"/></svg>
<span class="abs tab" style="left:468.5px;top:9.5px">graphic(demo)</span>
<svg class="abs" style="left:535px;top:13.2px" width="5.8" height="5.8" viewBox="0 0 7 7"><path d="M0.8 0.8L6.2 6.2M6.2 0.8L0.8 6.2" stroke="#7a7a7a" stroke-width="2.2"/><path d="M0.8 0.8L6.2 6.2M6.2 0.8L0.8 6.2" stroke="#fff" stroke-width="0.9"/></svg>
<!-- min/max -->
<svg class="abs" style="left:893px;top:1px" width="11" height="5" viewBox="0 0 11 5"><rect x="0.5" y="0.8" width="3.6" height="1.4" fill="#fff" stroke="#9a9a9a" stroke-width="0.6"/><rect x="6" y="0.5" width="4" height="3.8" fill="#fff" stroke="#9a9a9a" stroke-width="0.6"/></svg>

<div class="abs" style="left:460px;top:29px;width:443px;height:14px;background:#f0f0f0"></div>
<svg class="abs" style="left:0;top:0" width="906" height="480" viewBox="0 0 906 480">
<circle cx="467.4" cy="36" r="3.4" fill="none" stroke="#959cb0" stroke-width="1.6" stroke-dasharray="1.6 1.07"/><circle cx="467.4" cy="36" r="2.9" fill="#eceef4" stroke="#8c94aa" stroke-width="1"/><circle cx="467.4" cy="36" r="1.1" fill="#f8f8fb" stroke="#7d86a0" stroke-width="0.7"/>
<path d="M478.5 29.2V42.8" stroke="#8f8f8f" stroke-width="0.9"/>
<rect x="485.2" y="32.6" width="2.3" height="6.2" rx="0.5" fill="#e8352a"/><rect x="489.3" y="32.6" width="2.3" height="6.2" rx="0.5" fill="#e8352a"/>
<path d="M499.7 29.2V42.8" stroke="#8f8f8f" stroke-width="0.9"/>
<path d="M505.8 32.8H508.8L509.6 33.9H514.2V38.7H505.8Z" fill="#c4c4c4" stroke="#6c6c6c" stroke-width="0.9"/><path d="M506.8 35.2H513.4" stroke="#e4e4e4" stroke-width="0.7"/>
<path d="M520.2 32.8H523.2L524.0 33.9H528.6V38.7H520.2Z" fill="#c4c4c4" stroke="#6c6c6c" stroke-width="0.9"/><path d="M521.2 35.2H527.8000000000001" stroke="#e4e4e4" stroke-width="0.7"/>
<path d="M535.7 29.2V42.8" stroke="#8f8f8f" stroke-width="0.9"/>
<path d="M542.4 32.2V38H550" stroke="#222" stroke-width="0.9" fill="none"/><path d="M543 34.2L544.6 32.6L547 37L548.4 34.4L549.8 35.4" stroke="#e03a2a" stroke-width="0.9" fill="none"/><path d="M543 39.5H549.4" stroke="#f08a30" stroke-width="0.8"/>
<path d="M555.0 34.2H557.6M555.0 36.2H557.6" stroke="#3a6fe0" stroke-width="1"/><path d="M558.0 32.2V38H565.6" stroke="#222" stroke-width="0.9" fill="none"/><path d="M558.6 34.2L560.2 32.6L562.6 37L564.0 34.4L565.4 35.4" stroke="#e03a2a" stroke-width="0.9" fill="none"/><path d="M558.6 39.5H565.0" stroke="#f08a30" stroke-width="0.8"/>
<rect x="569.8000000000001" y="32.4" width="2" height="5.4" fill="#8fb4f0" stroke="#3a6fe0" stroke-width="0.5"/><path d="M572.6 32.2V38H580.2" stroke="#222" stroke-width="0.9" fill="none"/><path d="M573.2 34.2L574.8000000000001 32.6L577.2 37L578.6 34.4L580.0 35.4" stroke="#e03a2a" stroke-width="0.9" fill="none"/><path d="M573.2 39.5H579.6" stroke="#f08a30" stroke-width="0.8"/>
<path d="M585.8 31.4V40.2" stroke="#7fb0f0" stroke-width="1.2"/><ellipse cx="589" cy="35.8" rx="1.5" ry="1.7" fill="#fbe5d0" stroke="#f08a30" stroke-width="0.8"/><ellipse cx="592.2" cy="35.8" rx="1.5" ry="1.7" fill="#fbe5d0" stroke="#f08a30" stroke-width="0.8"/>
<path d="M603.6 31.6V40.2" stroke="#2b3fa8" stroke-width="1.1"/><path d="M602.4 33.4V38.6L599 36Z" fill="#4aa85a"/><path d="M604.8 33.4V38.6L608.2 36Z" fill="#4aa85a"/>
<path d="M616.2 31.4V40.2M619.6 31.4V40.2" stroke="#3a56d0" stroke-width="1"/>
<path d="M629 32V39H636.2" stroke="#222" stroke-width="1" fill="none"/><rect x="630.6" y="32.2" width="2" height="2" fill="#2f5fe0"/><path d="M632 36.8H635.6" stroke="#2f5fe0" stroke-width="1.1"/>
<rect x="640.2" y="29" width="28.4" height="13.6" fill="#8c8c8c"/>
<path d="M644 32V39.4H652" stroke="#222" stroke-width="0.9" fill="none"/><path d="M644.6 36L646.6 33.6L648.6 36.4L651.4 33" stroke="#e05a4a" stroke-width="0.9" fill="none"/><path d="M644.6 37.6L647 35.8L649.4 37.8L651.6 36.4" stroke="#3a7fe0" stroke-width="0.9" fill="none"/><path d="M645 40.4H651" stroke="#f08a30" stroke-width="0.7"/>
<path d="M657.4 36H665.2M661.3 32.2V39.8" stroke="#3a86e8" stroke-width="1"/><rect x="663.2" y="37.6" width="1.8" height="1.8" fill="#f08a30"/>
<path d="M672.4 29.2V42.8" stroke="#8f8f8f" stroke-width="0.9"/>
<path d="M678.4 35L682.2 31.8V33.8Q686.8 33.8 687 39.6Q685.6 36.4 682.2 36.4V38.4Z" fill="#f5c71a" stroke="#e0ac10" stroke-width="0.4"/>
<path d="M702.2 35L698.4 31.8V33.8Q693.8 33.8 693.6 39.6Q695 36.4 698.4 36.4V38.4Z" fill="#a0a0a0" stroke="#8a8a8a" stroke-width="0.4"/>
<path d="M708.4 29.2V42.8" stroke="#8f8f8f" stroke-width="0.9"/>
<rect x="714.2" y="32.2" width="9.2" height="7.2" rx="0.6" fill="#5c5c5c"/><rect x="715.4" y="33.2" width="2.6" height="1.6" fill="#c9c9c9"/><rect x="719" y="33.2" width="3.4" height="1.6" fill="#c9c9c9"/><rect x="718.4" y="35.4" width="3.6" height="2.8" fill="#2f6fe0"/><rect x="715.2" y="35.8" width="2.2" height="2" fill="#e8e8e8"/>
<path d="M729.6 29.2V42.8" stroke="#8f8f8f" stroke-width="0.9"/>
<path d="M739.8 31.8L742.8 33L741.8 35.8L738.8 34.8Z" fill="#5b8fd8"/><path d="M737.4 35.8H742.8L744 39.8H736.4Z" fill="#f1c3c8" stroke="#c98f97" stroke-width="0.6"/><path d="M738.5 37V39.4M740 37V39.4M741.5 37V39.4" stroke="#d9a0a8" stroke-width="0.5"/>
<path d="M751.7 29.2V42.8" stroke="#8f8f8f" stroke-width="0.9"/>
<rect x="758.8" y="33" width="5.4" height="5.2" fill="#eaf3ff" stroke="#2f7fe0" stroke-width="1"/><path d="M760.2 35.6H763M761.6 34.4V36.8" stroke="#2f7fe0" stroke-width="0.7"/><rect x="756.8" y="30.9" width="1.9" height="1.9" fill="#f0622a"/><rect x="764.4" y="38.3" width="1.9" height="1.9" fill="#f0622a"/>
<path d="M774.6 31.4V40.2M777.4 31.4V40.2" stroke="#2f7fe0" stroke-width="1"/><path d="M771 35.8H774M778 35.8H781" stroke="#f0622a" stroke-width="1.1"/><path d="M772.6 34.4L774.2 35.8L772.6 37.2ZM779.4 34.4L777.8 35.8L779.4 37.2Z" fill="#f0622a"/>
<path d="M785.8 34.8H794.6M785.8 37.4H794.6" stroke="#2f7fe0" stroke-width="1"/><path d="M790.2 31.4V34.2M790.2 38V40.8" stroke="#f0622a" stroke-width="1.1"/><path d="M788.8 32.8L790.2 34.4L791.6 32.8ZM788.8 39.4L790.2 37.8L791.6 39.4Z" fill="#f0622a"/>
<circle cx="803.9" cy="35.2" r="2.5" fill="#eaf3ff" stroke="#2f7fe0" stroke-width="1"/><path d="M805.8 37.2L807.8 39.2" stroke="#2f7fe0" stroke-width="1.2"/><path d="M802.6 35.2H805.2" stroke="#f0622a" stroke-width="0.8"/><path d="M806.6 32.2L808.2 33.4" stroke="#f0622a" stroke-width="0.9"/>
<circle cx="818.1" cy="35.2" r="2.5" fill="#eaf3ff" stroke="#2f7fe0" stroke-width="1"/><path d="M820.0 37.2L822.0 39.2" stroke="#2f7fe0" stroke-width="1.2"/><path d="M816.8000000000001 35.2H819.4000000000001" stroke="#f0622a" stroke-width="0.8"/><path d="M820.8000000000001 32.2L822.4000000000001 33.4" stroke="#f0622a" stroke-width="0.9"/>
<path d="M803.9 33.9V36.5" stroke="#f0622a" stroke-width="0.8"/>
<path d="M831 35.4Q830.4 33.4 832 33.6L832.6 34.6V32.8Q833.4 32 834 32.8V32.4Q834.8 31.8 835.4 32.6V33Q836.2 32.6 836.6 33.4V37Q836.4 39 834.6 39.2H833.2Q831.8 38.6 831 35.4Z" fill="#eaf3ff" stroke="#2f7fe0" stroke-width="0.8"/><path d="M835.6 31.6L837.2 32.6" stroke="#f0622a" stroke-width="0.9"/>
<rect x="841.2" y="29" width="14.6" height="13.8" fill="#8c8c8c"/>
<rect x="844.6" y="31.4" width="7.6" height="3.4" fill="#f4f8ff" stroke="#8fb0e0" stroke-width="0.5"/><rect x="844.6" y="36" width="5" height="3.6" fill="#f4f8ff" stroke="#8fb0e0" stroke-width="0.5"/><path d="M850.6 36.6L854 40.2M854 36.6L850.6 40.2" stroke="#e0302a" stroke-width="1.2"/>
<rect x="855.8" y="28.8" width="3.2" height="14.6" fill="#fbfbfb"/>
<path d="M862.8 31.8V38.2H869.6" stroke="#f09050" stroke-width="1" fill="none"/><rect x="865.6" y="32.8" width="1.8" height="1.8" fill="#e0402a"/><path d="M866 36.8H869" stroke="#3a7fe0" stroke-width="0.9"/>
<path d="M876 34H881.4L878.7 36.8Z" fill="#111"/>
</svg>
<span class="abs ui" style="left:894px;top:30.4px;width:9px;overflow:hidden;font-weight:bold">跳转</span>

<!-- signal table -->
<div class="abs" style="left:461.8px;top:48.8px;width:123px;height:14px;background:linear-gradient(#edf3fb,#e2ecf9 45%,#d5e4f6)"></div>
<div class="abs" style="left:461.8px;top:77px;width:123px;height:0.8px;background:#e6e6e6"></div>
<div class="abs" style="left:490.3px;top:48.8px;width:0.8px;height:28.6px;background:#cfcfcf"></div>
<div class="abs" style="left:519px;top:48.8px;width:0.8px;height:28.6px;background:#cfcfcf"></div>
<span class="abs h" style="left:524.2px;top:50px;font-size:7.7px;font-weight:400;color:#2a2a2a">信号名称</span>
<svg class="abs" style="left:471.5px;top:66.5px" width="8" height="8" viewBox="0 0 8 8"><rect x="0.5" y="0.5" width="7" height="7" fill="#fff" stroke="#a3b1bd" stroke-width="0.9"/><path d="M1.7 4L3.3 5.8L6.4 1.7" stroke="#2a9c3c" stroke-width="1.3" fill="none"/></svg>
<div class="abs" style="left:498.2px;top:67.8px;width:7.1px;height:7.2px;background:#1212c8"></div>
<span class="abs sg" id="sg" style="left:521px;top:64.6px">ACC_SpeedSetDis</span>
<svg class="abs" style="left:588.2px;top:50.8px" width="4" height="9" viewBox="0 0 4 9"><path d="M3.5 0.1L0.3 1.8L3.5 3.5ZM3.5 4.4L0.3 6.2L3.5 8Z" fill="#858585"/></svg>
<!-- right h-scroll -->
<div class="abs" style="left:462px;top:459.4px;width:123px;height:11.2px;background:#f0f0f0"></div>
<div class="abs" style="left:474px;top:459.4px;width:15px;height:11.2px;background:#c9c9c9"></div>
<svg class="abs" style="left:465.5px;top:461.5px" width="5" height="7" viewBox="0 0 5 7"><path d="M4 0.6L1 3.5L4 6.4" stroke="#505050" stroke-width="1.1" fill="none"/></svg>
<svg class="abs" style="left:576.5px;top:461.5px" width="5" height="7" viewBox="0 0 5 7"><path d="M1 0.6L4 3.5L1 6.4" stroke="#505050" stroke-width="1.1" fill="none"/></svg>

<svg class="abs" style="left:0;top:0" width="906" height="480" viewBox="0 0 906 480">
<path d="M641.10 46V459" stroke="#bcbcc6" stroke-width="0.7" stroke-dasharray="1 1.1"/>
<path d="M662.30 46V459" stroke="#bcbcc6" stroke-width="0.7" stroke-dasharray="1 1.1"/>
<path d="M683.50 46V459" stroke="#bcbcc6" stroke-width="0.7" stroke-dasharray="1 1.1"/>
<path d="M704.70 46V459" stroke="#bcbcc6" stroke-width="0.7" stroke-dasharray="1 1.1"/>
<path d="M725.90 46V459" stroke="#bcbcc6" stroke-width="0.7" stroke-dasharray="1 1.1"/>
<path d="M747.10 46V459" stroke="#bcbcc6" stroke-width="0.7" stroke-dasharray="1 1.1"/>
<path d="M768.30 46V459" stroke="#bcbcc6" stroke-width="0.7" stroke-dasharray="1 1.1"/>
<path d="M789.50 46V459" stroke="#bcbcc6" stroke-width="0.7" stroke-dasharray="1 1.1"/>
<path d="M810.70 46V459" stroke="#bcbcc6" stroke-width="0.7" stroke-dasharray="1 1.1"/>
<path d="M831.90 46V459" stroke="#bcbcc6" stroke-width="0.7" stroke-dasharray="1 1.1"/>
<path d="M853.10 46V459" stroke="#bcbcc6" stroke-width="0.7" stroke-dasharray="1 1.1"/>
<path d="M874.30 46V459" stroke="#bcbcc6" stroke-width="0.7" stroke-dasharray="1 1.1"/>
<path d="M895.50 46V459" stroke="#bcbcc6" stroke-width="0.7" stroke-dasharray="1 1.1"/>
<path d="M638.1 50.5V456" stroke="#dcdff6" stroke-width="0.7"/>
<path d="M635.9 456.80H638.3" stroke="#b4b8f0" stroke-width="0.7"/>
<path d="M635.9 453.92H638.3" stroke="#b4b8f0" stroke-width="0.7"/>
<path d="M635.9 451.04H638.3" stroke="#b4b8f0" stroke-width="0.7"/>
<path d="M635.9 448.16H638.3" stroke="#b4b8f0" stroke-width="0.7"/>
<path d="M635.9 445.28H638.3" stroke="#b4b8f0" stroke-width="0.7"/>
<path d="M635.2 442.40H638.3" stroke="#8f93e6" stroke-width="0.8"/>
<path d="M635.9 439.52H638.3" stroke="#b4b8f0" stroke-width="0.7"/>
<path d="M635.9 436.64H638.3" stroke="#b4b8f0" stroke-width="0.7"/>
<path d="M635.9 433.76H638.3" stroke="#b4b8f0" stroke-width="0.7"/>
<path d="M635.9 430.88H638.3" stroke="#b4b8f0" stroke-width="0.7"/>
<path d="M635.2 428.00H638.3" stroke="#8f93e6" stroke-width="0.8"/>
<path d="M635.9 425.12H638.3" stroke="#b4b8f0" stroke-width="0.7"/>
<path d="M635.9 422.24H638.3" stroke="#b4b8f0" stroke-width="0.7"/>
<path d="M635.9 419.36H638.3" stroke="#b4b8f0" stroke-width="0.7"/>
<path d="M635.9 416.48H638.3" stroke="#b4b8f0" stroke-width="0.7"/>
<path d="M635.2 413.60H638.3" stroke="#8f93e6" stroke-width="0.8"/>
<path d="M635.9 410.72H638.3" stroke="#b4b8f0" stroke-width="0.7"/>
<path d="M635.9 407.84H638.3" stroke="#b4b8f0" stroke-width="0.7"/>
<path d="M635.9 404.96H638.3" stroke="#b4b8f0" stroke-width="0.7"/>
<path d="M635.9 402.08H638.3" stroke="#b4b8f0" stroke-width="0.7"/>
<path d="M635.2 399.20H638.3" stroke="#8f93e6" stroke-width="0.8"/>
<path d="M635.9 396.32H638.3" stroke="#b4b8f0" stroke-width="0.7"/>
<path d="M635.9 393.44H638.3" stroke="#b4b8f0" stroke-width="0.7"/>
<path d="M635.9 390.56H638.3" stroke="#b4b8f0" stroke-width="0.7"/>
<path d="M635.9 387.68H638.3" stroke="#b4b8f0" stroke-width="0.7"/>
<path d="M635.2 384.80H638.3" stroke="#8f93e6" stroke-width="0.8"/>
<path d="M635.9 381.92H638.3" stroke="#b4b8f0" stroke-width="0.7"/>
<path d="M635.9 379.04H638.3" stroke="#b4b8f0" stroke-width="0.7"/>
<path d="M635.9 376.16H638.3" stroke="#b4b8f0" stroke-width="0.7"/>
<path d="M635.9 373.28H638.3" stroke="#b4b8f0" stroke-width="0.7"/>
<path d="M635.2 370.40H638.3" stroke="#8f93e6" stroke-width="0.8"/>
<path d="M635.9 367.52H638.3" stroke="#b4b8f0" stroke-width="0.7"/>
<path d="M635.9 364.64H638.3" stroke="#b4b8f0" stroke-width="0.7"/>
<path d="M635.9 361.76H638.3" stroke="#b4b8f0" stroke-width="0.7"/>
<path d="M635.9 358.88H638.3" stroke="#b4b8f0" stroke-width="0.7"/>
<path d="M635.2 356.00H638.3" stroke="#8f93e6" stroke-width="0.8"/>
<path d="M635.9 353.12H638.3" stroke="#b4b8f0" stroke-width="0.7"/>
<path d="M635.9 350.24H638.3" stroke="#b4b8f0" stroke-width="0.7"/>
<path d="M635.9 347.36H638.3" stroke="#b4b8f0" stroke-width="0.7"/>
<path d="M635.9 344.48H638.3" stroke="#b4b8f0" stroke-width="0.7"/>
<path d="M635.2 341.60H638.3" stroke="#8f93e6" stroke-width="0.8"/>
<path d="M635.9 338.72H638.3" stroke="#b4b8f0" stroke-width="0.7"/>
<path d="M635.9 335.84H638.3" stroke="#b4b8f0" stroke-width="0.7"/>
<path d="M635.9 332.96H638.3" stroke="#b4b8f0" stroke-width="0.7"/>
<path d="M635.9 330.08H638.3" stroke="#b4b8f0" stroke-width="0.7"/>
<path d="M635.2 327.20H638.3" stroke="#8f93e6" stroke-width="0.8"/>
<path d="M635.9 324.32H638.3" stroke="#b4b8f0" stroke-width="0.7"/>
<path d="M635.9 321.44H638.3" stroke="#b4b8f0" stroke-width="0.7"/>
<path d="M635.9 318.56H638.3" stroke="#b4b8f0" stroke-width="0.7"/>
<path d="M635.9 315.68H638.3" stroke="#b4b8f0" stroke-width="0.7"/>
<path d="M635.2 312.80H638.3" stroke="#8f93e6" stroke-width="0.8"/>
<path d="M635.9 309.92H638.3" stroke="#b4b8f0" stroke-width="0.7"/>
<path d="M635.9 307.04H638.3" stroke="#b4b8f0" stroke-width="0.7"/>
<path d="M635.9 304.16H638.3" stroke="#b4b8f0" stroke-width="0.7"/>
<path d="M635.9 301.28H638.3" stroke="#b4b8f0" stroke-width="0.7"/>
<path d="M635.2 298.40H638.3" stroke="#8f93e6" stroke-width="0.8"/>
<path d="M635.9 295.52H638.3" stroke="#b4b8f0" stroke-width="0.7"/>
<path d="M635.9 292.64H638.3" stroke="#b4b8f0" stroke-width="0.7"/>
<path d="M635.9 289.76H638.3" stroke="#b4b8f0" stroke-width="0.7"/>
<path d="M635.9 286.88H638.3" stroke="#b4b8f0" stroke-width="0.7"/>
<path d="M635.2 284.00H638.3" stroke="#8f93e6" stroke-width="0.8"/>
<path d="M635.9 281.12H638.3" stroke="#b4b8f0" stroke-width="0.7"/>
<path d="M635.9 278.24H638.3" stroke="#b4b8f0" stroke-width="0.7"/>
<path d="M635.9 275.36H638.3" stroke="#b4b8f0" stroke-width="0.7"/>
<path d="M635.9 272.48H638.3" stroke="#b4b8f0" stroke-width="0.7"/>
<path d="M635.2 269.60H638.3" stroke="#8f93e6" stroke-width="0.8"/>
<path d="M635.9 266.72H638.3" stroke="#b4b8f0" stroke-width="0.7"/>
<path d="M635.9 263.84H638.3" stroke="#b4b8f0" stroke-width="0.7"/>
<path d="M635.9 260.96H638.3" stroke="#b4b8f0" stroke-width="0.7"/>
<path d="M635.9 258.08H638.3" stroke="#b4b8f0" stroke-width="0.7"/>
<path d="M635.2 255.20H638.3" stroke="#8f93e6" stroke-width="0.8"/>
<path d="M635.9 252.32H638.3" stroke="#b4b8f0" stroke-width="0.7"/>
<path d="M635.9 249.44H638.3" stroke="#b4b8f0" stroke-width="0.7"/>
<path d="M635.9 246.56H638.3" stroke="#b4b8f0" stroke-width="0.7"/>
<path d="M635.9 243.68H638.3" stroke="#b4b8f0" stroke-width="0.7"/>
<path d="M635.2 240.80H638.3" stroke="#8f93e6" stroke-width="0.8"/>
<path d="M635.9 237.92H638.3" stroke="#b4b8f0" stroke-width="0.7"/>
<path d="M635.9 235.04H638.3" stroke="#b4b8f0" stroke-width="0.7"/>
<path d="M635.9 232.16H638.3" stroke="#b4b8f0" stroke-width="0.7"/>
<path d="M635.9 229.28H638.3" stroke="#b4b8f0" stroke-width="0.7"/>
<path d="M635.2 226.40H638.3" stroke="#8f93e6" stroke-width="0.8"/>
<path d="M635.9 223.52H638.3" stroke="#b4b8f0" stroke-width="0.7"/>
<path d="M635.9 220.64H638.3" stroke="#b4b8f0" stroke-width="0.7"/>
<path d="M635.9 217.76H638.3" stroke="#b4b8f0" stroke-width="0.7"/>
<path d="M635.9 214.88H638.3" stroke="#b4b8f0" stroke-width="0.7"/>
<path d="M635.2 212.00H638.3" stroke="#8f93e6" stroke-width="0.8"/>
<path d="M635.9 209.12H638.3" stroke="#b4b8f0" stroke-width="0.7"/>
<path d="M635.9 206.24H638.3" stroke="#b4b8f0" stroke-width="0.7"/>
<path d="M635.9 203.36H638.3" stroke="#b4b8f0" stroke-width="0.7"/>
<path d="M635.9 200.48H638.3" stroke="#b4b8f0" stroke-width="0.7"/>
<path d="M635.2 197.60H638.3" stroke="#8f93e6" stroke-width="0.8"/>
<path d="M635.9 194.72H638.3" stroke="#b4b8f0" stroke-width="0.7"/>
<path d="M635.9 191.84H638.3" stroke="#b4b8f0" stroke-width="0.7"/>
<path d="M635.9 188.96H638.3" stroke="#b4b8f0" stroke-width="0.7"/>
<path d="M635.9 186.08H638.3" stroke="#b4b8f0" stroke-width="0.7"/>
<path d="M635.2 183.20H638.3" stroke="#8f93e6" stroke-width="0.8"/>
<path d="M635.9 180.32H638.3" stroke="#b4b8f0" stroke-width="0.7"/>
<path d="M635.9 177.44H638.3" stroke="#b4b8f0" stroke-width="0.7"/>
<path d="M635.9 174.56H638.3" stroke="#b4b8f0" stroke-width="0.7"/>
<path d="M635.9 171.68H638.3" stroke="#b4b8f0" stroke-width="0.7"/>
<path d="M635.2 168.80H638.3" stroke="#8f93e6" stroke-width="0.8"/>
<path d="M635.9 165.92H638.3" stroke="#b4b8f0" stroke-width="0.7"/>
<path d="M635.9 163.04H638.3" stroke="#b4b8f0" stroke-width="0.7"/>
<path d="M635.9 160.16H638.3" stroke="#b4b8f0" stroke-width="0.7"/>
<path d="M635.9 157.28H638.3" stroke="#b4b8f0" stroke-width="0.7"/>
<path d="M635.2 154.40H638.3" stroke="#8f93e6" stroke-width="0.8"/>
<path d="M635.9 151.52H638.3" stroke="#b4b8f0" stroke-width="0.7"/>
<path d="M635.9 148.64H638.3" stroke="#b4b8f0" stroke-width="0.7"/>
<path d="M635.9 145.76H638.3" stroke="#b4b8f0" stroke-width="0.7"/>
<path d="M635.9 142.88H638.3" stroke="#b4b8f0" stroke-width="0.7"/>
<path d="M635.2 140.00H638.3" stroke="#8f93e6" stroke-width="0.8"/>
<path d="M635.9 137.12H638.3" stroke="#b4b8f0" stroke-width="0.7"/>
<path d="M635.9 134.24H638.3" stroke="#b4b8f0" stroke-width="0.7"/>
<path d="M635.9 131.36H638.3" stroke="#b4b8f0" stroke-width="0.7"/>
<path d="M635.9 128.48H638.3" stroke="#b4b8f0" stroke-width="0.7"/>
<path d="M635.2 125.60H638.3" stroke="#8f93e6" stroke-width="0.8"/>
<path d="M635.9 122.72H638.3" stroke="#b4b8f0" stroke-width="0.7"/>
<path d="M635.9 119.84H638.3" stroke="#b4b8f0" stroke-width="0.7"/>
<path d="M635.9 116.96H638.3" stroke="#b4b8f0" stroke-width="0.7"/>
<path d="M635.9 114.08H638.3" stroke="#b4b8f0" stroke-width="0.7"/>
<path d="M635.2 111.20H638.3" stroke="#8f93e6" stroke-width="0.8"/>
<path d="M635.9 108.32H638.3" stroke="#b4b8f0" stroke-width="0.7"/>
<path d="M635.9 105.44H638.3" stroke="#b4b8f0" stroke-width="0.7"/>
<path d="M635.9 102.56H638.3" stroke="#b4b8f0" stroke-width="0.7"/>
<path d="M635.9 99.68H638.3" stroke="#b4b8f0" stroke-width="0.7"/>
<path d="M635.2 96.80H638.3" stroke="#8f93e6" stroke-width="0.8"/>
<path d="M635.9 93.92H638.3" stroke="#b4b8f0" stroke-width="0.7"/>
<path d="M635.9 91.04H638.3" stroke="#b4b8f0" stroke-width="0.7"/>
<path d="M635.9 88.16H638.3" stroke="#b4b8f0" stroke-width="0.7"/>
<path d="M635.9 85.28H638.3" stroke="#b4b8f0" stroke-width="0.7"/>
<path d="M635.2 82.40H638.3" stroke="#8f93e6" stroke-width="0.8"/>
<path d="M635.9 79.52H638.3" stroke="#b4b8f0" stroke-width="0.7"/>
<path d="M635.9 76.64H638.3" stroke="#b4b8f0" stroke-width="0.7"/>
<path d="M635.9 73.76H638.3" stroke="#b4b8f0" stroke-width="0.7"/>
<path d="M635.9 70.88H638.3" stroke="#b4b8f0" stroke-width="0.7"/>
<path d="M635.2 68.00H638.3" stroke="#8f93e6" stroke-width="0.8"/>
<path d="M635.9 65.12H638.3" stroke="#b4b8f0" stroke-width="0.7"/>
<path d="M635.9 62.24H638.3" stroke="#b4b8f0" stroke-width="0.7"/>
<path d="M635.9 59.36H638.3" stroke="#b4b8f0" stroke-width="0.7"/>
<path d="M635.9 56.48H638.3" stroke="#b4b8f0" stroke-width="0.7"/>
<path d="M635.9 53.60H638.3" stroke="#b4b8f0" stroke-width="0.7"/>
<text x="633.6" y="445.70" text-anchor="end" class="yl">-160</text>
<text x="633.6" y="431.30" text-anchor="end" class="yl">-140</text>
<text x="633.6" y="416.90" text-anchor="end" class="yl">-120</text>
<text x="633.6" y="402.50" text-anchor="end" class="yl">-100</text>
<text x="633.6" y="388.10" text-anchor="end" class="yl">-80</text>
<text x="633.6" y="373.70" text-anchor="end" class="yl">-60</text>
<text x="633.6" y="359.30" text-anchor="end" class="yl">-40</text>
<text x="633.6" y="344.90" text-anchor="end" class="yl">-20</text>
<text x="633.6" y="330.50" text-anchor="end" class="yl">0</text>
<text x="633.6" y="316.10" text-anchor="end" class="yl">20</text>
<text x="633.6" y="301.70" text-anchor="end" class="yl">40</text>
<text x="633.6" y="287.30" text-anchor="end" class="yl">60</text>
<text x="633.6" y="272.90" text-anchor="end" class="yl">80</text>
<text x="633.6" y="258.50" text-anchor="end" class="yl">100</text>
<text x="633.6" y="244.10" text-anchor="end" class="yl">120</text>
<text x="633.6" y="229.70" text-anchor="end" class="yl">140</text>
<text x="633.6" y="215.30" text-anchor="end" class="yl">160</text>
<text x="633.6" y="200.90" text-anchor="end" class="yl">180</text>
<text x="633.6" y="186.50" text-anchor="end" class="yl">200</text>
<text x="633.6" y="172.10" text-anchor="end" class="yl">220</text>
<text x="633.6" y="157.70" text-anchor="end" class="yl">240</text>
<text x="633.6" y="143.30" text-anchor="end" class="yl">260</text>
<text x="633.6" y="128.90" text-anchor="end" class="yl">280</text>
<text x="633.6" y="114.50" text-anchor="end" class="yl">300</text>
<text x="633.6" y="100.10" text-anchor="end" class="yl">320</text>
<text x="633.6" y="85.70" text-anchor="end" class="yl">340</text>
<text x="633.6" y="71.30" text-anchor="end" class="yl">360</text>
<path d="M637.5 459.4H903" stroke="#8a8a8a" stroke-width="0.8"/>
<path d="M637.64 459.4V464" stroke="#777" stroke-width="0.8"/>
<path d="M641.10 458.7V463" stroke="#777" stroke-width="0.7"/>
<path d="M645.34 459.4V461.8" stroke="#777" stroke-width="0.7"/>
<path d="M649.58 459.4V461.8" stroke="#777" stroke-width="0.7"/>
<path d="M653.82 459.4V461.8" stroke="#777" stroke-width="0.7"/>
<path d="M658.06 459.4V461.8" stroke="#777" stroke-width="0.7"/>
<path d="M662.30 458.7V463" stroke="#777" stroke-width="0.7"/>
<path d="M666.54 459.4V461.8" stroke="#777" stroke-width="0.7"/>
<path d="M670.78 459.4V461.8" stroke="#777" stroke-width="0.7"/>
<path d="M675.02 459.4V461.8" stroke="#777" stroke-width="0.7"/>
<path d="M679.26 459.4V461.8" stroke="#777" stroke-width="0.7"/>
<path d="M683.50 458.7V463" stroke="#777" stroke-width="0.7"/>
<path d="M687.74 459.4V461.8" stroke="#777" stroke-width="0.7"/>
<path d="M691.98 459.4V461.8" stroke="#777" stroke-width="0.7"/>
<path d="M696.22 459.4V461.8" stroke="#777" stroke-width="0.7"/>
<path d="M700.46 459.4V461.8" stroke="#777" stroke-width="0.7"/>
<path d="M704.70 458.7V463" stroke="#777" stroke-width="0.7"/>
<path d="M708.94 459.4V461.8" stroke="#777" stroke-width="0.7"/>
<path d="M713.18 459.4V461.8" stroke="#777" stroke-width="0.7"/>
<path d="M717.42 459.4V461.8" stroke="#777" stroke-width="0.7"/>
<path d="M721.66 459.4V461.8" stroke="#777" stroke-width="0.7"/>
<path d="M725.90 458.7V463" stroke="#777" stroke-width="0.7"/>
<path d="M730.14 459.4V461.8" stroke="#777" stroke-width="0.7"/>
<path d="M734.38 459.4V461.8" stroke="#777" stroke-width="0.7"/>
<path d="M738.62 459.4V461.8" stroke="#777" stroke-width="0.7"/>
<path d="M742.86 459.4V461.8" stroke="#777" stroke-width="0.7"/>
<path d="M747.10 458.7V463" stroke="#777" stroke-width="0.7"/>
<path d="M751.34 459.4V461.8" stroke="#777" stroke-width="0.7"/>
<path d="M755.58 459.4V461.8" stroke="#777" stroke-width="0.7"/>
<path d="M759.82 459.4V461.8" stroke="#777" stroke-width="0.7"/>
<path d="M764.06 459.4V461.8" stroke="#777" stroke-width="0.7"/>
<path d="M768.30 458.7V463" stroke="#777" stroke-width="0.7"/>
<path d="M772.54 459.4V461.8" stroke="#777" stroke-width="0.7"/>
<path d="M776.78 459.4V461.8" stroke="#777" stroke-width="0.7"/>
<path d="M781.02 459.4V461.8" stroke="#777" stroke-width="0.7"/>
<path d="M785.26 459.4V461.8" stroke="#777" stroke-width="0.7"/>
<path d="M789.50 458.7V463" stroke="#777" stroke-width="0.7"/>
<path d="M793.74 459.4V461.8" stroke="#777" stroke-width="0.7"/>
<path d="M797.98 459.4V461.8" stroke="#777" stroke-width="0.7"/>
<path d="M802.22 459.4V461.8" stroke="#777" stroke-width="0.7"/>
<path d="M806.46 459.4V461.8" stroke="#777" stroke-width="0.7"/>
<path d="M810.70 458.7V463" stroke="#777" stroke-width="0.7"/>
<path d="M814.94 459.4V461.8" stroke="#777" stroke-width="0.7"/>
<path d="M819.18 459.4V461.8" stroke="#777" stroke-width="0.7"/>
<path d="M823.42 459.4V461.8" stroke="#777" stroke-width="0.7"/>
<path d="M827.66 459.4V461.8" stroke="#777" stroke-width="0.7"/>
<path d="M831.90 458.7V463" stroke="#777" stroke-width="0.7"/>
<path d="M836.14 459.4V461.8" stroke="#777" stroke-width="0.7"/>
<path d="M840.38 459.4V461.8" stroke="#777" stroke-width="0.7"/>
<path d="M844.62 459.4V461.8" stroke="#777" stroke-width="0.7"/>
<path d="M848.86 459.4V461.8" stroke="#777" stroke-width="0.7"/>
<path d="M853.10 458.7V463" stroke="#777" stroke-width="0.7"/>
<path d="M857.34 459.4V461.8" stroke="#777" stroke-width="0.7"/>
<path d="M861.58 459.4V461.8" stroke="#777" stroke-width="0.7"/>
<path d="M865.82 459.4V461.8" stroke="#777" stroke-width="0.7"/>
<path d="M870.06 459.4V461.8" stroke="#777" stroke-width="0.7"/>
<path d="M874.30 458.7V463" stroke="#777" stroke-width="0.7"/>
<path d="M878.54 459.4V461.8" stroke="#777" stroke-width="0.7"/>
<path d="M882.78 459.4V461.8" stroke="#777" stroke-width="0.7"/>
<path d="M887.02 459.4V461.8" stroke="#777" stroke-width="0.7"/>
<path d="M891.26 459.4V461.8" stroke="#777" stroke-width="0.7"/>
<path d="M895.50 458.7V463" stroke="#777" stroke-width="0.7"/>
<path d="M899.74 459.4V461.8" stroke="#777" stroke-width="0.7"/>
<text x="638" y="472.2" text-anchor="middle" class="xl">27.674049</text>
<text x="683.50" y="472.2" text-anchor="middle" class="xl">32</text>
<text x="704.70" y="472.2" text-anchor="middle" class="xl">34</text>
<text x="725.90" y="472.2" text-anchor="middle" class="xl">36</text>
<text x="747.10" y="472.2" text-anchor="middle" class="xl">38</text>
<text x="768.30" y="472.2" text-anchor="middle" class="xl">40</text>
<text x="789.50" y="472.2" text-anchor="middle" class="xl">42</text>
<text x="810.70" y="472.2" text-anchor="middle" class="xl">44</text>
<text x="831.90" y="472.2" text-anchor="middle" class="xl">46</text>
<text x="853.10" y="472.2" text-anchor="middle" class="xl">48</text>
<text x="874.30" y="472.2" text-anchor="middle" class="xl">50</text>
<text x="895.50" y="472.2" text-anchor="middle" class="xl">52</text>
<path d="M637.64 214.16L691.9 142.52" stroke="#1414b4" stroke-width="2.4" fill="none"/>
<path d="M691.8 142.52V327.20" stroke="#4e4edc" stroke-width="0.85" fill="none"/>
<path d="M692.3 327.20L832.5 142.52" stroke="#1414b4" stroke-width="2.4" fill="none"/>
<path d="M832.4 142.52V327.20" stroke="#4e4edc" stroke-width="0.85" fill="none"/>
<path d="M832.9 327.20L906 232.40" stroke="#1414b4" stroke-width="2.4" fill="none"/>
<text transform="translate(600.4,252) rotate(-90)" text-anchor="middle" class="yt">ACC_SpeedSetDis(km/h)</text>
</svg>
</body>
</html>
